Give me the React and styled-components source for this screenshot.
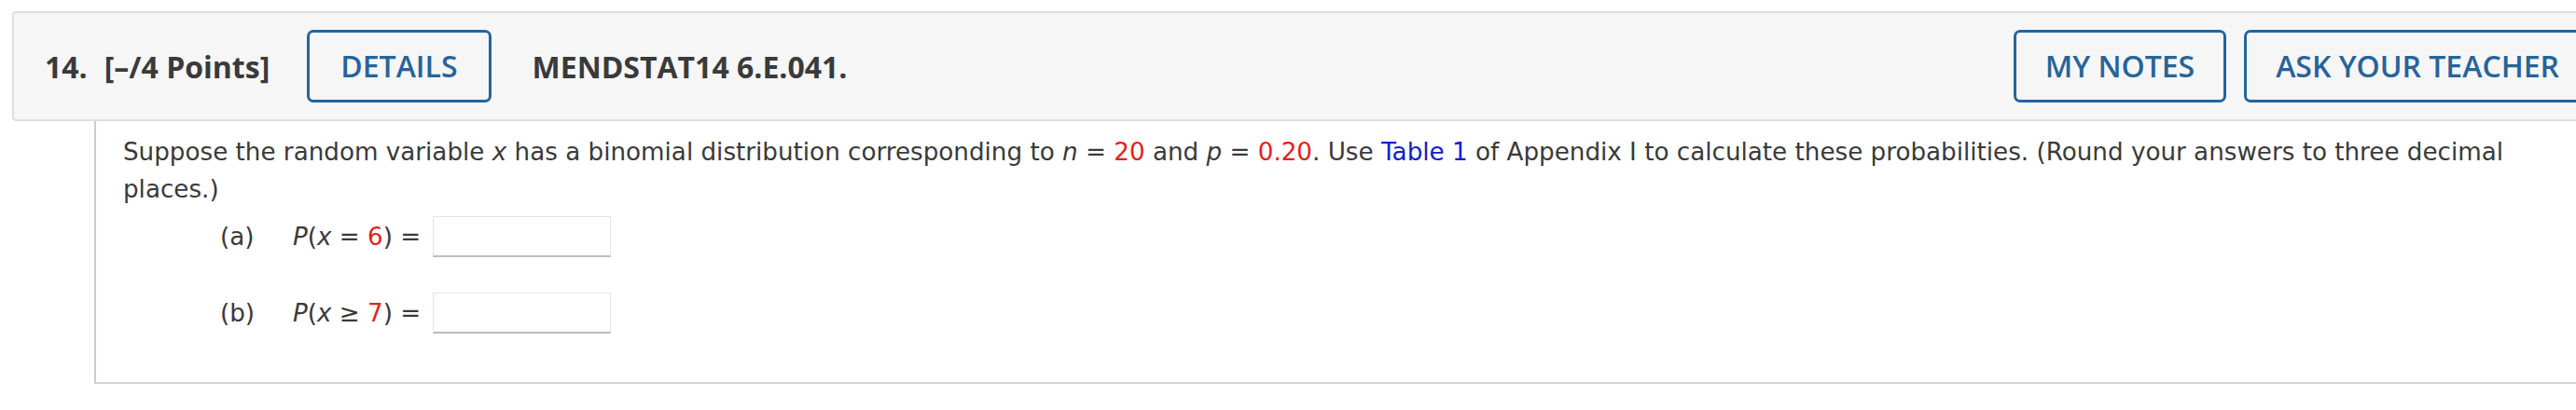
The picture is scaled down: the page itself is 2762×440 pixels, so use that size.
import React from "react";
import styled, { createGlobalStyle } from "styled-components";

const GlobalStyle = createGlobalStyle`
  html, body {
    margin: 0;
    padding: 0;
    background: #ffffff;
    overflow: hidden;
  }
  * { box-sizing: border-box; }
`;

const Page = styled.div`
  width: 2813px;
  padding: 12px 0 0 13px;
  font-family: "Open Sans", "DejaVu Sans", sans-serif;
  color: #3a3a3a;
`;

const Header = styled.header`
  display: flex;
  align-items: center;
  height: 118px;
  padding: 0 33px;
  background: #f6f6f6;
  border: 2px solid #dedede;
  border-radius: 4px;
`;

const QNumber = styled.span`
  font-size: 32px;
  font-weight: 700;
  color: #3a3a3a;
  margin-right: 18px;
`;

const Points = styled.span`
  font-size: 32px;
  font-weight: 700;
  color: #3a3a3a;
`;

const Title = styled.span`
  font-size: 32px;
  font-weight: 700;
  color: #3a3a3a;
  margin-left: 44px;
`;

const OutlineButton = styled.button`
  height: 78px;
  padding: 0 ${(p) => p.$pad || 31}px;
  margin-left: ${(p) => p.$offset || 0}px;
  background: transparent;
  border: 3px solid #26649a;
  border-radius: 7px;
  color: #26649a;
  font-family: "Open Sans", sans-serif;
  font-size: 32px;
  font-weight: 600;
  line-height: 1;
  white-space: nowrap;
  cursor: pointer;
`;

const Actions = styled.div`
  display: flex;
  align-items: center;
  gap: 19px;
  margin-left: auto;
`;

const Panel = styled.section`
  margin-left: 88px;
  padding: 13px 29px 52px;
  border-left: 2px solid #cccccc;
  border-bottom: 2px solid #d4d4d4;
  font-family: "DejaVu Sans", Verdana, sans-serif;
  font-size: 26.2px;
  line-height: 40px;
  color: #3a3a3a;
`;

const Prompt = styled.p`
  margin: 0;
  max-width: 2600px;
`;

const Var = styled.i`
  font-style: italic;
`;

const Given = styled.span`
  color: #e3231b;
`;

const Link = styled.a`
  color: #1020c8;
  text-decoration: none;
`;

const Parts = styled.div`
  display: flex;
  flex-direction: column;
  gap: 38px;
  margin-top: 9px;
  padding-left: 104px;
`;

const PartRow = styled.div`
  display: flex;
  align-items: center;
  height: 44px;
`;

const PartLabel = styled.span`
  width: 78px;
  flex: none;
`;

const Expr = styled.span`
  white-space: pre;
`;

const AnswerBox = styled.input`
  width: 191px;
  height: 44px;
  margin-left: 13px;
  border: 1px solid #e4e4e4;
  border-bottom: 2px solid #bdbdbd;
  background: #ffffff;
  font-family: "DejaVu Sans", sans-serif;
  font-size: 24px;
  outline: none;
`;

export default function App() {
  return (
    <>
      <GlobalStyle />
      <Page>
        <Header>
          <QNumber>14.</QNumber>
          <Points>[–/4 Points]</Points>
          <OutlineButton $offset={40} $pad={33}>DETAILS</OutlineButton>
          <Title>MENDSTAT14 6.E.041.</Title>
          <Actions>
            <OutlineButton>MY NOTES</OutlineButton>
            <OutlineButton>ASK YOUR TEACHER</OutlineButton>
          </Actions>
        </Header>
        <Panel>
          <Prompt>
            Suppose the random variable <Var>x</Var> has a binomial distribution
            corresponding to <Var>n</Var> = <Given>20</Given> and <Var>p</Var> ={" "}
            <Given>0.20</Given>. Use <Link href="#">Table 1</Link> of Appendix I to
            calculate these probabilities. (Round your answers to three decimal
            places.)
          </Prompt>
          <Parts>
            <PartRow>
              <PartLabel>(a)</PartLabel>
              <Expr>
                <Var>P</Var>(<Var>x</Var> = <Given>6</Given>) =
              </Expr>
              <AnswerBox type="text" />
            </PartRow>
            <PartRow>
              <PartLabel>(b)</PartLabel>
              <Expr>
                <Var>P</Var>(<Var>x</Var> ≥ <Given>7</Given>) =
              </Expr>
              <AnswerBox type="text" />
            </PartRow>
          </Parts>
        </Panel>
      </Page>
    </>
  );
}
